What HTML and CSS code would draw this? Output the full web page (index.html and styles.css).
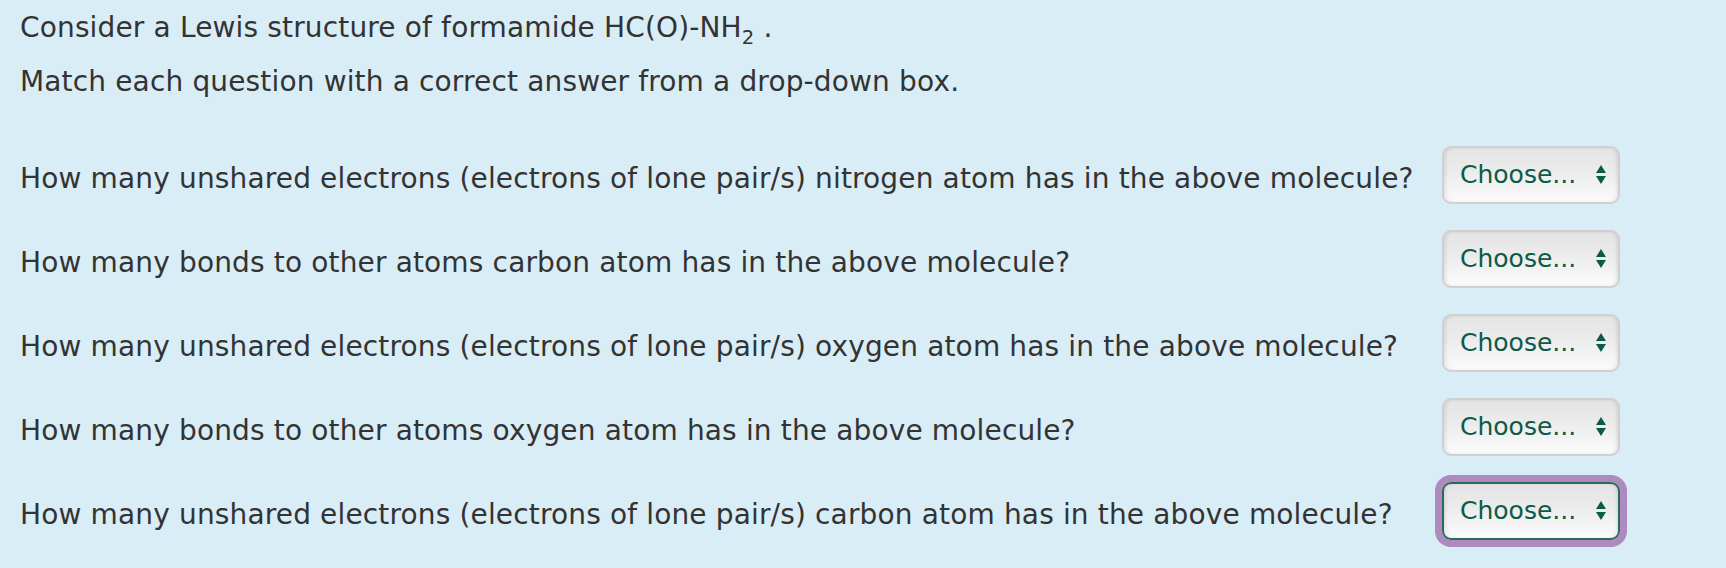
FILE: index.html
```html
<!DOCTYPE html>
<html lang="en">
<head>
<meta charset="utf-8">
<title>Formamide Lewis structure</title>
<link rel="stylesheet" href="styles.css">
</head>
<body>
<div class="qtext">
  <p class="intro">Consider a Lewis structure of formamide HC(O)-NH<sub>2</sub> .</p>
  <p class="intro">Match each question with a correct answer from a drop-down box.</p>
</div>
<div class="matching">
  <div class="row">
    <span class="question">How many unshared electrons (electrons of lone pair/s) nitrogen atom has in the above molecule?</span>
    <div class="choice">
      <select><option>Choose...</option></select>
      <svg class="arrows" viewBox="0 0 10 19" width="10" height="19"><path d="M5 0 L10 8 L0 8 Z M0 11 L10 11 L5 19 Z"/></svg>
    </div>
  </div>
  <div class="row">
    <span class="question">How many bonds to other atoms carbon atom has in the above molecule?</span>
    <div class="choice">
      <select><option>Choose...</option></select>
      <svg class="arrows" viewBox="0 0 10 19" width="10" height="19"><path d="M5 0 L10 8 L0 8 Z M0 11 L10 11 L5 19 Z"/></svg>
    </div>
  </div>
  <div class="row">
    <span class="question">How many unshared electrons (electrons of lone pair/s) oxygen atom has in the above molecule?</span>
    <div class="choice">
      <select><option>Choose...</option></select>
      <svg class="arrows" viewBox="0 0 10 19" width="10" height="19"><path d="M5 0 L10 8 L0 8 Z M0 11 L10 11 L5 19 Z"/></svg>
    </div>
  </div>
  <div class="row">
    <span class="question">How many bonds to other atoms oxygen atom has in the above molecule?</span>
    <div class="choice">
      <select><option>Choose...</option></select>
      <svg class="arrows" viewBox="0 0 10 19" width="10" height="19"><path d="M5 0 L10 8 L0 8 Z M0 11 L10 11 L5 19 Z"/></svg>
    </div>
  </div>
  <div class="row">
    <span class="question">How many unshared electrons (electrons of lone pair/s) carbon atom has in the above molecule?</span>
    <div class="choice is-focused">
      <select><option>Choose...</option></select>
      <svg class="arrows" viewBox="0 0 10 19" width="10" height="19"><path d="M5 0 L10 8 L0 8 Z M0 11 L10 11 L5 19 Z"/></svg>
    </div>
  </div>
</div>
</body>
</html>
```

FILE: styles.css
```css
html, body {
  margin: 0;
  background: #d9edf7;
}

body {
  font-family: "DejaVu Sans", Verdana, sans-serif;
  font-size: 28px;
  letter-spacing: 0.15px;
  color: #333333;
  padding: 12px 0 0 20px;
  height: 568px;
  box-sizing: border-box;
}

.intro {
  margin: 0 0 23px 0;
  line-height: 31px;
}

.intro sub {
  font-size: 70%;
  line-height: 0;
  vertical-align: -0.35em;
}

.matching {
  margin-top: 36px;
  display: flex;
  flex-direction: column;
}

.row {
  display: grid;
  grid-template-columns: 1422px 178px;
  align-items: center;
  height: 84px;
}

.question {
  padding-top: 6px;
  line-height: 31px;
}

.choice {
  position: relative;
  width: 178px;
  height: 58px;
  box-sizing: border-box;
  border: 2px solid #d0d0d0;
  border-radius: 9px;
  background: linear-gradient(to bottom, #e4e4e4 0%, #ececec 45%, #fbfbfb 100%);
  box-shadow: inset 3px 0 4px -2px rgba(0,0,0,0.12), inset -3px 0 4px -2px rgba(0,0,0,0.12);
}

.choice select {
  appearance: none;
  -webkit-appearance: none;
  width: 100%;
  height: 100%;
  border: 0;
  margin: 0;
  padding: 0 0 2px 16px;
  background: transparent;
  font-family: "DejaVu Sans", Verdana, sans-serif;
  font-size: 25px;
  color: #0c5a48;
  outline: none;
}

.choice .arrows {
  position: absolute;
  right: 12px;
  top: 17px;
  fill: #0c5a48;
  pointer-events: none;
}

.choice.is-focused {
  border-color: #2a6b5d;
  box-shadow: 0 0 0 7px #ad8bbf, inset 3px 0 4px -2px rgba(0,0,0,0.12), inset -3px 0 4px -2px rgba(0,0,0,0.12);
}
```
